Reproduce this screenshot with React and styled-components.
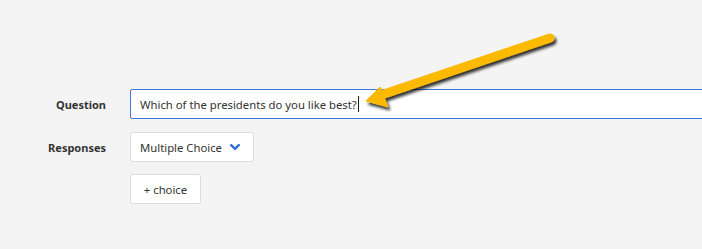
import React from "react";
import styled, { createGlobalStyle } from "styled-components";

const GlobalStyle = createGlobalStyle`
  html, body {
    margin: 0;
    padding: 0;
    background: #f4f4f4;
    font-family: "Noto Sans", "Open Sans", sans-serif;
    overflow: hidden;
  }
`;

export default function App() {
  return (
    <Page>
      <GlobalStyle />
      <Form>
        <Label>Question</Label>
        <TextField>
          Which of the presidents do you like best?
          <Caret />
        </TextField>

        <Label>Responses</Label>
        <div>
          <Select>
            Multiple Choice
            <Chevron viewBox="0 0 10 6">
              <path d="M1.2 1.2 L5 4.8 L8.8 1.2" />
            </Chevron>
          </Select>
        </div>

        <span />
        <div>
          <ChoiceBtn>+ choice</ChoiceBtn>
        </div>
      </Form>

      {/* annotation arrow drawn over the screenshot */}
      <Arrow width="702" height="249" viewBox="0 0 702 249">
        <defs>
          <filter id="shadow" x="-20%" y="-20%" width="140%" height="140%">
            <feGaussianBlur in="SourceAlpha" stdDeviation="1.6" />
            <feOffset dx="2" dy="3" result="blur" />
            <feComponentTransfer>
              <feFuncA type="linear" slope="0.8" />
            </feComponentTransfer>
            <feMerge>
              <feMergeNode />
              <feMergeNode in="SourceGraphic" />
            </feMerge>
          </filter>
        </defs>
        <g filter="url(#shadow)" fill="#fbb900" stroke="#fbb900">
          <line
            x1="550"
            y1="38"
            x2="378"
            y2="96"
            strokeWidth="9"
            strokeLinecap="round"
          />
          <polygon points="366,101 380,87 388,107" strokeWidth="1" strokeLinejoin="round" />
        </g>
      </Arrow>
    </Page>
  );
}

const Page = styled.div`
  position: relative;
  width: 702px;
  height: 249px;
  overflow: hidden;
`;

const Form = styled.div`
  display: grid;
  grid-template-columns: 106px 1fr;
  column-gap: 24px;
  row-gap: 13px;
  align-items: center;
  padding-top: 89px;
`;

const Label = styled.span`
  text-align: right;
  font-size: 11px;
  font-weight: 700;
  color: #333;
`;

const TextField = styled.div`
  box-sizing: border-box;
  height: 30px;
  width: 600px;
  margin-right: -40px;
  display: flex;
  align-items: center;
  padding: 0 9px;
  background: #fff;
  border: 1px solid #3b78d8;
  border-radius: 2px;
  font-size: 11.3px;
  color: #333;
  white-space: nowrap;
`;

const Caret = styled.span`
  display: inline-block;
  width: 1px;
  height: 16px;
  margin-left: 1px;
  background: #222;
`;

const Select = styled.div`
  box-sizing: border-box;
  display: inline-flex;
  align-items: center;
  gap: 8px;
  height: 30px;
  padding: 0 13px 0 9px;
  background: #fff;
  border: 1px solid #dcdcdc;
  border-radius: 3px;
  font-size: 11.3px;
  color: #333;
`;

const Chevron = styled.svg`
  width: 10px;
  height: 6px;
  fill: none;
  stroke: #2f6fd6;
  stroke-width: 2.4;
  stroke-linecap: round;
  stroke-linejoin: round;
`;

const ChoiceBtn = styled.button`
  box-sizing: border-box;
  height: 30px;
  width: 71px;
  margin-top: -1px;
  background: #fff;
  border: 1px solid #dcdcdc;
  border-radius: 2px;
  font-family: inherit;
  font-size: 11.3px;
  color: #333;
  cursor: pointer;
`;

const Arrow = styled.svg`
  position: absolute;
  left: 0;
  top: 0;
  pointer-events: none;
`;
